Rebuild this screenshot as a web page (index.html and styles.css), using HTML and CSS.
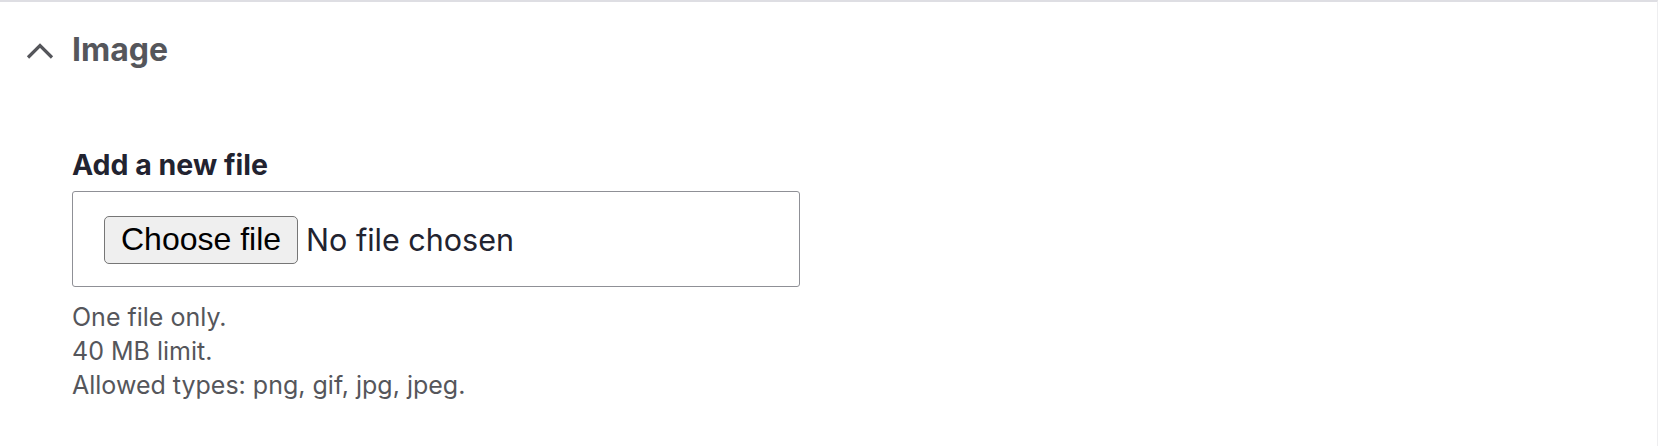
FILE: index.html
```html
<!DOCTYPE html>
<html lang="en">
<head>
    <meta charset="UTF-8">
    <meta name="viewport" content="width=device-width, initial-scale=1.0">
    <title>Image</title>
    <link rel="stylesheet" href="styles.css">
</head>
<body>

    <!-- Collapsible Image Section -->
    <details class="panel" open>
        <summary class="panel-title">
            <svg class="chevron" width="28" height="16" viewBox="0 0 28 16">
                <polyline points="2,14.5 14,2.5 26,14.5" fill="none" stroke="#55565b" stroke-width="3.2"/>
            </svg>
            <span>Image</span>
        </summary>

        <div class="panel-body">
            <div class="field-label">Add a new file</div>
            <div class="file-box">
                <input type="file" id="fileUpload" class="file-input">
                <label class="file-btn" for="fileUpload">Choose file</label>
                <span class="file-name">No file chosen</span>
            </div>
            <div class="description">
                One file only.<br>
                40 MB limit.<br>
                Allowed types: png, gif, jpg, jpeg.
            </div>
        </div>
    </details>

</body>
</html>
```

FILE: styles.css
```css
body {
    font-family: Inter, "Noto Sans", sans-serif;
    margin: 0;
    background: #fff;
    color: #222330;
}

/* Section wrapper */
.panel {
    border-top: 2px solid #dedee3;
    border-right: 1px solid #eeeef0;
    height: 444px;
}

.panel-title {
    list-style: none;
    display: flex;
    align-items: center;
    padding: 30px 0 0 26px;
    font-size: 32px;
    line-height: 36px;
    font-weight: 700;
    color: #55565b;
    cursor: pointer;
}

.panel-title::-webkit-details-marker {
    display: none;
}

.chevron {
    margin-right: 18px;
    margin-top: 1px;
}

.panel-body {
    padding: 80px 0 0 72px;
}

.field-label {
    font-size: 28.5px;
    line-height: 34px;
    font-weight: 700;
    color: #222330;
    margin-bottom: 9px;
}

/* File input box */
.file-box {
    width: 728px;
    height: 96px;
    box-sizing: border-box;
    border: 1px solid #8f9096;
    border-radius: 3px;
    padding-left: 31px;
    display: flex;
    align-items: center;
}

.file-input {
    display: none;
}

.file-btn {
    font-family: "Liberation Sans", Arial, sans-serif;
    font-size: 32px;
    height: 48px;
    box-sizing: border-box;
    display: flex;
    align-items: center;
    padding: 0 16px;
    margin: 1px 8px 0 0;
    background: #efefef;
    color: #000;
    border: 1px solid #767676;
    border-radius: 5px;
    cursor: pointer;
}

.file-name {
    font-size: 30.5px;
    color: #222330;
}

.description {
    margin-top: 13px;
    font-size: 25px;
    line-height: 34px;
    color: #55565b;
}
```
